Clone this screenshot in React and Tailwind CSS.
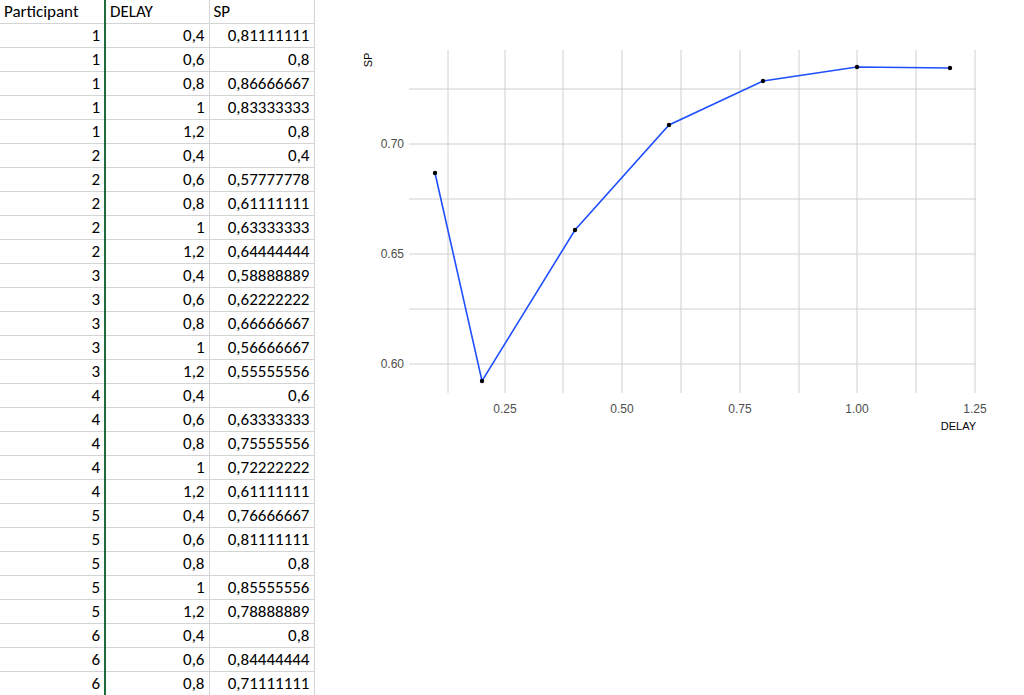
const rows = [
  [1, "0,4", "0,81111111"], [1, "0,6", "0,8"], [1, "0,8", "0,86666667"], [1, "1", "0,83333333"], [1, "1,2", "0,8"],
  [2, "0,4", "0,4"], [2, "0,6", "0,57777778"], [2, "0,8", "0,61111111"], [2, "1", "0,63333333"], [2, "1,2", "0,64444444"],
  [3, "0,4", "0,58888889"], [3, "0,6", "0,62222222"], [3, "0,8", "0,66666667"], [3, "1", "0,56666667"], [3, "1,2", "0,55555556"],
  [4, "0,4", "0,6"], [4, "0,6", "0,63333333"], [4, "0,8", "0,75555556"], [4, "1", "0,72222222"], [4, "1,2", "0,61111111"],
  [5, "0,4", "0,76666667"], [5, "0,6", "0,81111111"], [5, "0,8", "0,8"], [5, "1", "0,85555556"], [5, "1,2", "0,78888889"],
  [6, "0,4", "0,8"], [6, "0,6", "0,84444444"], [6, "0,8", "0,71111111"],
];

const pts = [[434, 173], [481, 381], [574, 230], [668, 125], [762, 81], [856, 67], [949, 68]];
const vx = [447, 504, 562, 621, 680, 739, 798, 856, 915, 974];
const hy = [89, 144, 199, 254, 309, 364];

function Chart() {
  const o = 314;
  return (
    <svg width="710" height="695" className="block">
      <g transform={`translate(${-o},0)`}>
        {vx.map((x) => <line key={x} x1={x} x2={x} y1={50} y2={393} stroke="#d0d0d0" strokeWidth="1" />)}
        {hy.map((y) => <line key={y} x1={408} x2={975} y1={y} y2={y} stroke="#d0d0d0" strokeWidth="1" />)}
        {[[144, "0.70"], [254, "0.65"], [364, "0.60"]].map(([y, t]) => (
          <text key={t} x={403} y={y + 4} textAnchor="end" fontSize="12" fill="#4d4d4d" fontFamily="Liberation Sans, Arial, sans-serif">{t}</text>
        ))}
        {[[504, "0.25"], [621, "0.50"], [739, "0.75"], [856, "1.00"], [974, "1.25"]].map(([x, t]) => (
          <text key={t} x={x} y={413} textAnchor="middle" fontSize="12" fill="#4d4d4d" fontFamily="Liberation Sans, Arial, sans-serif">{t}</text>
        ))}
        <text x={975} y={430} textAnchor="end" fontSize="11" fill="#000" fontFamily="Liberation Sans, Arial, sans-serif">DELAY</text>
        <text transform="translate(371,60) rotate(-90)" textAnchor="middle" fontSize="11" fill="#000" fontFamily="Liberation Sans, Arial, sans-serif">SP</text>
        <polyline points={pts.map((p) => p.join(",")).join(" ")} fill="none" stroke="#1f4fff" strokeWidth="1.6" />
        {pts.map(([x, y]) => <circle key={x} cx={x} cy={y} r="2.2" fill="#000" />)}
      </g>
    </svg>
  );
}

export default function App() {
  const cell = "h-[23px] p-0 px-1 border-b border-r border-[#d4d4d4] leading-[23px] text-[17px] text-black";
  return (
    <div className="flex w-[1024px] h-[695px] overflow-hidden bg-white" style={{ fontFamily: "Carlito, 'Liberation Sans', Arial, sans-serif" }}>
      <table className="border-collapse shrink-0 self-start table-fixed w-[314px]">
        <tbody>
          <tr>
            <td className={`${cell} w-[105px] text-left`}>Participant</td>
            <td className={`${cell} w-[104px] text-left border-l-2 border-l-[#1e6b3c]`}>DELAY</td>
            <td className={`${cell} w-[105px] text-left`}>SP</td>
          </tr>
          {rows.map((r, i) => (
            <tr key={i}>
              <td className={`${cell} text-right`}>{r[0]}</td>
              <td className={`${cell} text-right border-l-2 border-l-[#1e6b3c]`}>{r[1]}</td>
              <td className={`${cell} text-right`}>{r[2]}</td>
            </tr>
          ))}
        </tbody>
      </table>
      <Chart />
    </div>
  );
}
